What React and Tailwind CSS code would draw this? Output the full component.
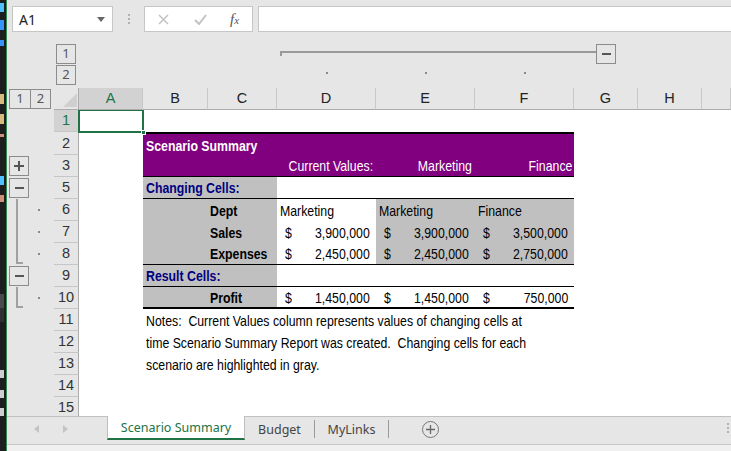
// Excel scenario summary sheet
const T = "font-['Liberation_Sans',Arial,sans-serif] text-[15px] leading-none whitespace-nowrap";
const UI = "font-['Noto_Sans','Liberation_Sans',sans-serif]";

const S = ({ children, r }) => (
  <span className={`inline-block whitespace-pre scale-x-[0.82] ${r ? "origin-right" : "origin-left"}`}>{children}</span>
);

const OutlineBtn = ({ children, className = "" }) => (
  <div className={`w-[20px] h-[20px] border border-[#8c8c8c] flex items-center justify-center text-[#555] text-[13px] ${UI} ${className}`}>
    {children}
  </div>
);

const Minus = () => <div className="w-[9px] h-[2px] bg-[#555]" />;
const Plus = () => (
  <svg width="10" height="10" viewBox="0 0 10 10"><path d="M0 5h10M5 0v10" stroke="#555" strokeWidth="2" /></svg>
);

const Dot = ({ className = "" }) => <div className={`w-[2px] h-[2px] bg-[#8a8a8a] ${className}`} />;

function Outline({ kind }) {
  if (kind === "plus")
    return <div className="pl-[2px] pt-px"><OutlineBtn><Plus /></OutlineBtn></div>;
  if (kind === "minus")
    return <div className="pl-[2px] pt-px"><OutlineBtn><Minus /></OutlineBtn></div>;
  if (kind === "line")
    return (
      <div className="flex items-center h-full">
        <div className="ml-[9px] w-[2px] h-full bg-[#a0a0a0]" />
        <Dot className="ml-[20px]" />
      </div>
    );
  if (kind === "end")
    return (
      <div className="flex items-start h-full">
        <div className="ml-[9px] w-[7px] h-[21px] border-l-2 border-b-2 border-[#a0a0a0]" />
        <Dot className="ml-[15px] self-center" />
      </div>
    );
  return null;
}

function Row({ n, h = "h-[22px]", outline, selected, children }) {
  return (
    <div className={`flex ${h} shrink-0`}>
      <div className="w-[47px] shrink-0">{outline && <Outline kind={outline} />}</div>
      <div className={`w-[25px] shrink-0 border-r border-b border-[#c6c6c6] border-r-[#ababab] flex items-center justify-center pt-px text-[14.5px] font-['Liberation_Sans',sans-serif] ${selected ? "bg-[#d2d2d2] text-[#217346]" : "text-[#333]"}`}>
        {n}
      </div>
      <div className="flex-1 flex bg-white">{children}</div>
    </div>
  );
}

const Money = ({ v, gray }) => (
  <div className={`w-[99px] flex items-center justify-between pl-[8px] pr-[6px] ${gray ? "bg-[#c0c0c0]" : ""} ${T}`}>
    <S>$</S>
    <S r>{v}</S>
  </div>
);

const A = ({ children }) => <div className="w-[64px] shrink-0">{children}</div>;

const strip = [
  ["h-[3px]", ""], ["h-[9px]", "bg-[#4fc1ff]"], ["h-[8px]", ""], ["h-[10px]", "bg-[#3794ff]"], ["h-[10px]", ""],
  ["h-[6px]", "bg-[#3794ff]"], ["h-[48px]", ""], ["h-[10px]", "bg-[#d7ba7d]"], ["h-[10px]", ""], ["h-[10px]", "bg-[#d7ba7d]"],
  ["h-[10px]", ""], ["h-[3px]", "bg-[#ce9178]"], ["h-[39px]", ""], ["h-[9px]", "bg-[#4fc1ff]"], ["h-[10px]", ""],
  ["h-[7px]", "bg-[#ce9178]"], ["h-[92px]", ""], ["h-[14px]", "bg-[#4a4a4a]"], ["h-[14px]", "bg-[#303030]"],
  ["h-[48px]", ""], ["h-[8px]", "bg-[#cfcfcf]"], ["h-[12px]", ""], ["h-[8px]", "bg-[#cfcfcf]"], ["h-[10px]", ""],
  ["h-[8px]", "bg-[#cfcfcf]"],
];

export default function App() {
  const heads = [
    ["A", "w-[64px]"], ["B", "w-[65px]"], ["C", "w-[69px]"], ["D", "w-[99px]"], ["E", "w-[99px]"],
    ["F", "w-[99px]"], ["G", "w-[64px]"], ["H", "w-[64px]"], ["", "flex-1"],
  ];

  return (
    <div className="w-[731px] h-[451px] flex overflow-hidden bg-[#e6e6e6]">
      {/* window behind */}
      <div className="w-[7px] shrink-0 bg-[#1e1e1e] border-r border-[#2c8a52] overflow-hidden flex flex-col">
        {strip.map(([h, c], i) => (
          <div key={i} className={`${h} shrink-0 w-[4px] ${c}`} />
        ))}
      </div>

      <div className="flex-1 flex flex-col min-w-0">
        {/* formula bar */}
        <div className="h-[40px] shrink-0 flex items-start pt-[6px]">
          <div className={`ml-[5px] w-[101px] h-[26px] bg-white border border-[#c6c6c6] flex items-center pl-[6px] pr-[7px] text-[14px] text-[#222] ${UI}`}>
            <span>A1</span>
            <svg className="ml-auto" width="8" height="5" viewBox="0 0 8 5"><path d="M0 0h8L4 5z" fill="#666" /></svg>
          </div>
          <div className="w-[31px] h-[26px] flex flex-col items-center justify-center gap-[2px]">
            <div className="w-[2px] h-[2px] bg-[#b0b0b0]" />
            <div className="w-[2px] h-[2px] bg-[#b0b0b0]" />
            <div className="w-[2px] h-[2px] bg-[#b0b0b0]" />
          </div>
          <div className="w-[109px] h-[26px] bg-white border border-[#c6c6c6] flex items-center">
            <svg className="ml-[13px]" width="11" height="11" viewBox="0 0 11 11"><path d="M1 1l9 9M10 1l-9 9" stroke="#c3c3c3" strokeWidth="1.5" /></svg>
            <svg className="ml-[25px]" width="13" height="11" viewBox="0 0 13 11"><path d="M1 6l4 4 7-9" stroke="#c3c3c3" strokeWidth="2" fill="none" /></svg>
            <span className="ml-[23px] font-['Liberation_Serif',serif] italic text-[15px] text-[#555]">f<span className="text-[11px]">x</span></span>
          </div>
          <div className="ml-[5px] flex-1 h-[26px] bg-white border border-[#c6c6c6] border-r-0" />
        </div>

        {/* column outline */}
        <div className="h-[48px] shrink-0 flex">
          <div className="w-[47px] shrink-0" />
          <div className="w-[25px] shrink-0 pt-[4px] pl-[2px] flex flex-col gap-px">
            <OutlineBtn>1</OutlineBtn>
            <OutlineBtn>2</OutlineBtn>
          </div>
          <div className="w-[198px] shrink-0" />
          <div className="w-[99px] shrink-0 flex flex-col pt-[11px]">
            <div className="ml-[3px] h-[5px] border-l-2 border-t-2 border-[#9a9a9a]" />
            <Dot className="mt-[16px] self-center" />
          </div>
          <div className="w-[99px] shrink-0 flex flex-col pt-[11px]">
            <div className="h-[2px] bg-[#9a9a9a]" />
            <Dot className="mt-[19px] self-center" />
          </div>
          <div className="w-[99px] shrink-0 flex flex-col pt-[11px]">
            <div className="h-[2px] bg-[#9a9a9a]" />
            <Dot className="mt-[19px] self-center" />
          </div>
          <div className="w-[64px] shrink-0 flex items-start">
            <div className="w-[22px] h-[2px] mt-[11px] bg-[#9a9a9a]" />
            <OutlineBtn className="mt-[4px]"><Minus /></OutlineBtn>
          </div>
        </div>

        {/* column headers */}
        <div className="h-[22px] shrink-0 flex">
          <div className="w-[47px] shrink-0 flex items-start pt-px pl-[2px]">
            <OutlineBtn className="w-[22px]">1</OutlineBtn>
            <OutlineBtn className="w-[21px] -ml-px">2</OutlineBtn>
          </div>
          <div className="w-[25px] shrink-0 border-r border-b border-[#ababab]">
            <svg width="24" height="21" viewBox="0 0 24 21"><path d="M9 19h14V5z" fill="#cfcfcf" /></svg>
          </div>
          {heads.map(([k, w], i) => (
            <div key={i} className={`${w} shrink-0 border-r border-b border-[#c9c9c9] border-b-[#ababab] flex items-center justify-center text-[14.5px] font-['Liberation_Sans',sans-serif] ${k === "A" ? "bg-[#d2d2d2] text-[#217346]" : "text-[#222]"}`}>
              {k}
            </div>
          ))}
        </div>

        {/* grid */}
        <div className="flex-1 min-h-0 overflow-hidden flex flex-col">
          <Row n="1" selected>
            <div className="w-[64px] shrink-0 relative outline-2 outline-[#217346] -outline-offset-1">
              <div className="absolute -right-[3px] -bottom-[3px] w-[5px] h-[5px] bg-[#217346] border border-white" />
            </div>
          </Row>
          <Row n="2" h="h-[23px]">
            <A />
            <div className={`w-[431px] bg-[#800080] border-t-2 border-black text-white font-bold pl-[3px] pt-[2px] flex items-center ${T}`}>
              <S>Scenario Summary</S>
            </div>
          </Row>
          <Row n="3" outline="plus">
            <A />
            <div className={`w-[431px] flex bg-[#800080] border-b border-black text-white ${T}`}>
              <div className="w-[134px]" />
              <div className="w-[99px] flex items-center justify-end pr-[3px]"><S r>Current Values:</S></div>
              <div className="w-[99px] flex items-center justify-end pr-[3px]"><S r>Marketing</S></div>
              <div className="w-[99px] flex items-center justify-end pr-[2px]"><S r>Finance</S></div>
            </div>
          </Row>
          <Row n="5" outline="minus">
            <A />
            <div className={`w-[431px] flex border-b border-black ${T}`}>
              <div className="w-[134px] bg-[#c0c0c0] text-[#000080] font-bold flex items-center pl-[3px]"><S>Changing Cells:</S></div>
            </div>
          </Row>
          <Row n="6" outline="line">
            <A />
            <div className={`w-[431px] flex ${T}`}>
              <div className="w-[65px] bg-[#c0c0c0]" />
              <div className="w-[69px] bg-[#c0c0c0] font-bold flex items-center pl-[2px]"><S>Dept</S></div>
              <div className="w-[99px] flex items-center pl-[3px]"><S>Marketing</S></div>
              <div className="w-[99px] bg-[#c0c0c0] flex items-center pl-[3px]"><S>Marketing</S></div>
              <div className="w-[99px] bg-[#c0c0c0] flex items-center pl-[3px]"><S>Finance</S></div>
            </div>
          </Row>
          <Row n="7" outline="line">
            <A />
            <div className={`w-[431px] flex ${T}`}>
              <div className="w-[65px] bg-[#c0c0c0]" />
              <div className="w-[69px] bg-[#c0c0c0] font-bold flex items-center pl-[2px]"><S>Sales</S></div>
              <Money v="3,900,000" />
              <Money v="3,900,000" gray />
              <Money v="3,500,000" gray />
            </div>
          </Row>
          <Row n="8" outline="end">
            <A />
            <div className={`w-[431px] flex border-b border-black ${T}`}>
              <div className="w-[65px] bg-[#c0c0c0]" />
              <div className="w-[69px] bg-[#c0c0c0] font-bold flex items-center pl-[2px]"><S>Expenses</S></div>
              <Money v="2,450,000" />
              <Money v="2,450,000" gray />
              <Money v="2,750,000" gray />
            </div>
          </Row>
          <Row n="9" outline="minus">
            <A />
            <div className={`w-[431px] flex border-b border-black ${T}`}>
              <div className="w-[134px] bg-[#c0c0c0] text-[#000080] font-bold flex items-center pl-[3px]"><S>Result Cells:</S></div>
            </div>
          </Row>
          <Row n="10" outline="end">
            <A />
            <div className={`w-[431px] flex border-b-2 border-black ${T}`}>
              <div className="w-[65px] bg-[#c0c0c0]" />
              <div className="w-[69px] bg-[#c0c0c0] font-bold flex items-center pl-[2px]"><S>Profit</S></div>
              <Money v="1,450,000" />
              <Money v="1,450,000" />
              <Money v="750,000" />
            </div>
          </Row>
          {[
            ["11", "Notes:  Current Values column represents values of changing cells at"],
            ["12", "time Scenario Summary Report was created.  Changing cells for each"],
            ["13", "scenario are highlighted in gray."],
            ["14", ""],
            ["15", ""],
          ].map(([n, t]) => (
            <Row key={n} n={n}>
              <A />
              <div className={`flex items-center pl-[3px] ${T}`}>{t && <S>{t}</S>}</div>
            </Row>
          ))}
        </div>

        {/* sheet tabs */}
        <div className={`h-[28px] shrink-0 flex items-start border-t border-[#c0c0c0] ${UI}`}>
          <div className="w-[100px] h-[24px] shrink-0 flex items-center">
            <svg className="ml-[27px]" width="5" height="8" viewBox="0 0 5 8"><path d="M5 0v8L0 4z" fill="#c4c4c4" /></svg>
            <svg className="ml-[24px]" width="5" height="8" viewBox="0 0 5 8"><path d="M0 0v8l5-4z" fill="#c4c4c4" /></svg>
          </div>
          <div className="w-[138px] h-[24px] -mt-px pt-[2px] bg-white border-x border-[#bdbdbd] border-b-2 border-b-[#217346] flex items-center justify-center text-[12.5px] text-[#217346]">
            Scenario Summary
          </div>
          <div className="w-[69px] h-[23px] pt-[3px] flex items-center justify-center text-[12.5px] text-[#444]">Budget</div>
          <div className="w-px h-[18px] mt-[3px] bg-[#9a9a9a]" />
          <div className="w-[73px] h-[23px] pt-[3px] flex items-center justify-center text-[12.5px] text-[#444]">MyLinks</div>
          <div className="w-px h-[18px] mt-[3px] bg-[#9a9a9a]" />
          <div className="ml-[33px] mt-[4px] w-[17px] h-[17px] rounded-full border border-[#777] flex items-center justify-center">
            <svg width="9" height="9" viewBox="0 0 9 9"><path d="M0 4.5h9M4.5 0v9" stroke="#666" strokeWidth="1.3" /></svg>
          </div>
          <div className="ml-auto mr-[2px] mt-[6px] flex flex-col gap-[2px]">
            <div className="w-[2px] h-[2px] bg-[#b0b0b0]" />
            <div className="w-[2px] h-[2px] bg-[#b0b0b0]" />
            <div className="w-[2px] h-[2px] bg-[#b0b0b0]" />
          </div>
        </div>
        <div className="h-[7px] shrink-0 bg-[#f0f0f0] border-t border-[#c6c6c6]" />
      </div>
    </div>
  );
}
